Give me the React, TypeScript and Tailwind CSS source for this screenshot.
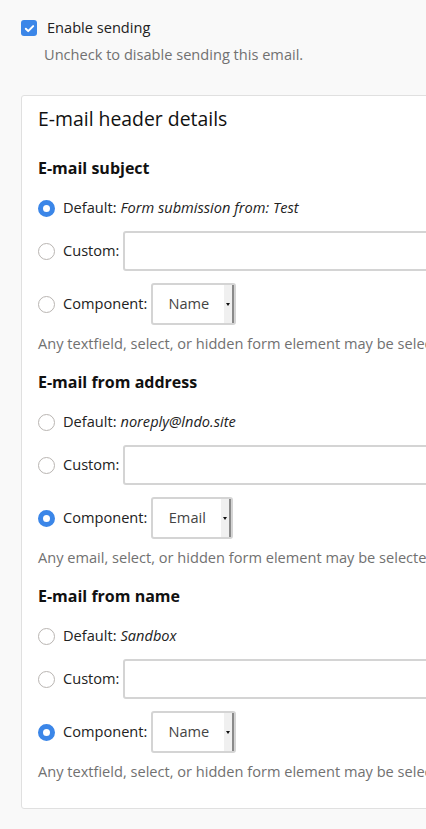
import type { ReactNode } from "react";

function Radio({ checked }: { checked?: boolean }) {
  return checked ? (
    <span className="block h-[17px] w-[17px] shrink-0 rounded-full border-[5px] border-[#3b86e8] bg-white" />
  ) : (
    <span className="block h-[17px] w-[17px] shrink-0 rounded-full border border-[#b9b5b2] bg-white" />
  );
}

function Select({ value, width }: { value: string; width: string }) {
  return (
    <div className={`flex h-[42px] items-stretch rounded-[3px] border-2 border-[#d4d4d4] bg-white ${width}`}>
      <div className="flex flex-1 items-center justify-center text-[14.6px] text-[#444]">{value}</div>
      <div className="flex w-[10px] items-center justify-center border-r-2 border-[#8a8a8a] bg-[#f0f0f0]">
        <span className="block h-0 w-0 border-x-[2.5px] border-t-[3px] border-x-transparent border-t-[#111]" />
      </div>
    </div>
  );
}

function Row({ checked, children, h = "h-[28px]", className = "" }: { checked?: boolean; children: ReactNode; h?: string; className?: string }) {
  return (
    <div className={`flex items-center ${h} ${className}`}>
      <Radio checked={checked} />
      <div className="ml-[8px] flex items-center text-[14.6px] text-[#222]">{children}</div>
    </div>
  );
}

function Section({
  title,
  defaultText,
  selected,
  componentValue,
  selectWidth,
  help,
  className = "",
}: {
  title: string;
  defaultText: string;
  selected: "default" | "component";
  componentValue: string;
  selectWidth: string;
  help: string;
  className?: string;
}) {
  return (
    <div className={className}>
      <div className="flex h-[28px] items-center text-[16px] font-bold text-[#111]">{title}</div>
      <Row checked={selected === "default"} className="mt-[12px]">
        <span>Default:</span>
        <span className="ml-[4px] italic">{defaultText}</span>
      </Row>
      <Row h="h-[40px]" className="mt-[9px]">
        <span>Custom:</span>
        <input className="ml-[4px] h-[40px] w-[340px] rounded-[3px] border-2 border-[#d4d4d4] bg-white outline-none" />
      </Row>
      <Row checked={selected === "component"} h="h-[42px]" className="mt-[12px]">
        <span>Component:</span>
        <span className="ml-[4px]">
          <Select value={componentValue} width={selectWidth} />
        </span>
      </Row>
      <div className="mt-[9px] flex h-[20px] items-center whitespace-nowrap text-[14.6px] text-[#717171]">{help}</div>
    </div>
  );
}

export default function App() {
  return (
    <div className="h-[829px] w-[426px] overflow-hidden bg-[#f9f9f9] font-['Open_Sans',sans-serif]">
      <div className="pl-[21px] pt-[20px]">
        {/* Enable sending */}
        <div className="flex h-[16px] items-center">
          <span className="flex h-[16px] w-[16px] items-center justify-center rounded-[3px] bg-[#3b86e8]">
            <svg width="11" height="11" viewBox="0 0 12 12" fill="none">
              <path d="M2 6.3l2.6 2.6L10 3.4" stroke="white" strokeWidth="2.2" strokeLinecap="round" strokeLinejoin="round" />
            </svg>
          </span>
          <span className="ml-[10px] text-[14.6px] text-[#222]">Enable sending</span>
        </div>
        <div className="mt-[9px] pl-[23px] text-[14.6px] leading-[18px] text-[#717171]">Uncheck to disable sending this email.</div>

        {/* Header details card */}
        <div className="mt-[32px] w-[560px] rounded-[3px] border border-[#e0e0e0] bg-white pb-[26px] pl-[16px]">
          <div className="flex h-[45px] items-center text-[19.4px] text-[#111]">E-mail header details</div>
          <Section
            className="mt-[13px]"
            title="E-mail subject"
            defaultText="Form submission from: Test"
            selected="default"
            componentValue="Name"
            selectWidth="w-[85px]"
            help="Any textfield, select, or hidden form element may be selected as the subject for e-mails."
          />
          <Section
            className="mt-[14px]"
            title="E-mail from address"
            defaultText="noreply@lndo.site"
            selected="component"
            componentValue="Email"
            selectWidth="w-[82px]"
            help="Any email, select, or hidden form element may be selected as the sender's e-mail address."
          />
          <Section
            className="mt-[14px]"
            title="E-mail from name"
            defaultText="Sandbox"
            selected="component"
            componentValue="Name"
            selectWidth="w-[85px]"
            help="Any textfield, select, or hidden form element may be selected as the sender's name for e-mails."
          />
        </div>
      </div>
    </div>
  );
}
